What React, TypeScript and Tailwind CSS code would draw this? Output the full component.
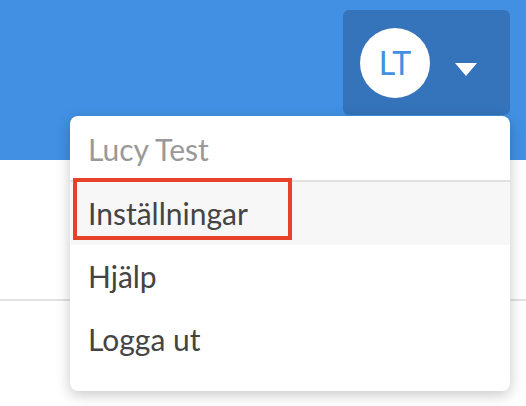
export default function App() {
  return (
    <div className="relative w-[526px] h-[406px] bg-white overflow-hidden font-['Lato','Noto_Sans',sans-serif]">
      <header className="h-[160px] bg-[#4190e3] flex justify-end pt-[10px] pr-[16px]">
        <button className="w-[167px] h-[105px] rounded-[6px] bg-[#3573bb] flex items-center pl-[17px]">
          <span className="w-[70px] h-[70px] rounded-full bg-white flex items-center justify-center text-[32px] text-[#4190e3]">
            LT
          </span>
          <svg className="ml-[25px] mt-[14px]" width="22" height="13" viewBox="0 0 22 13">
            <path d="M0 0 H22 L11 13 Z" fill="white" />
          </svg>
        </button>
      </header>
      <div className="h-[141px] border-b-2 border-[#e2e2e2]" />

      <div className="absolute left-[70px] top-[116px] w-[440px] h-[275px] bg-white rounded-[8px] shadow-[0_4px_14px_rgba(0,0,0,0.22)] pb-[20px]">
        <div className="h-[66px] flex items-end pb-[8px] pl-[18px] border-b-2 border-[#e2e2e2] text-[30px] text-[#999999]">
          Lucy Test
        </div>
        <div className="relative h-[63px] flex items-center pl-[18px] bg-[#f7f7f7] text-[30px] text-[#444444]">
          Inställningar
          <div className="absolute left-[3px] top-[-4px] w-[219px] h-[62px] border-4 border-[#e8412a]" />
        </div>
        <div className="h-[63px] flex items-center pl-[18px] text-[30px] text-[#444444]">Hjälp</div>
        <div className="h-[63px] flex items-center pl-[18px] text-[30px] text-[#444444]">Logga ut</div>
      </div>
    </div>
  );
}
